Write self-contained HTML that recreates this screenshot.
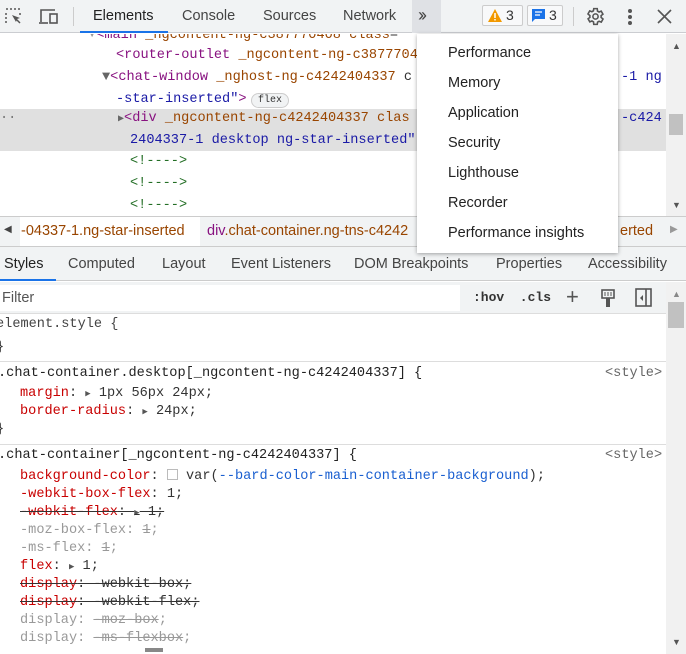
<!DOCTYPE html>
<html><head><style>
*{margin:0;padding:0;box-sizing:border-box}
body{width:686px;height:654px;overflow:hidden;background:#fff;font-family:"Liberation Sans",sans-serif;font-size:14px;color:#333;position:relative}
.abs{position:absolute}
.mono{font-family:"Liberation Mono",monospace;font-size:13.6px;white-space:pre}
.tb{left:0;top:0;width:686px;height:33px;background:#f1f3f4;border-bottom:1px solid #cbcdd1}
.tab{top:8px;font-size:14.5px;color:#444}
.tag{color:#881280}.attr{color:#994500}.val{color:#1a1aa6}.cm{color:#236e25}
.prop{color:#c80000}.grey{color:#999}
.row{left:0;height:22px;line-height:22px}
.menu{left:417px;top:34px;width:201px;height:219px;background:#fff;box-shadow:0 1px 4px rgba(0,0,0,.35)}
.menu div{position:absolute;left:31px;font-size:14.5px;color:#222;white-space:nowrap}
</style></head><body>
<div class="abs tb"></div>
<svg class="abs" style="left:4px;top:7px" width="20" height="20" viewBox="0 0 20 20"><path d="M2 2h2M6 2h2M10 2h2M14 2h2M2 6v2M2 10v2M2 14v2M16 6v2" stroke="#555" stroke-width="1.5"/><path d="M8 8l8 3-3 1-1 3z" fill="#555"/><path d="M12 12l4 4" stroke="#555" stroke-width="1.5"/></svg>
<svg class="abs" style="left:38px;top:8px" width="22" height="18" viewBox="0 0 22 18"><path d="M3 14V2h14" stroke="#555" stroke-width="1.6" fill="none"/><path d="M1 15h9" stroke="#555" stroke-width="1.6"/><rect x="12" y="6" width="7" height="9" stroke="#555" stroke-width="1.6" fill="none"/></svg>
<div class="abs" style="left:73px;top:7px;width:1px;height:19px;background:#ccc"></div>
<div class="abs tab" style="left:93px;color:#222">Elements</div>
<div class="abs" style="left:80px;top:31px;width:88px;height:2px;background:#1a73e8"></div>
<div class="abs tab" style="left:182px">Console</div>
<div class="abs tab" style="left:263px">Sources</div>
<div class="abs tab" style="left:343px">Network</div>
<div class="abs" style="left:412px;top:0;width:29px;height:33px;background:#dfe1e5"></div>
<div class="abs" style="left:418px;top:5px;font-size:18px;color:#444;letter-spacing:-3px">››</div>
<div class="abs" style="left:482px;top:5px;width:41px;height:21px;border:1px solid #ccc;border-radius:2px;background:#f8f9fa"></div>
<svg class="abs" style="left:488px;top:9px" width="14" height="13" viewBox="0 0 14 13"><path d="M7 0L14 13H0z" fill="#f29900"/><path d="M7 4v5M7 10v1.5" stroke="#fff" stroke-width="1.5"/></svg>
<div class="abs" style="left:506px;top:7px;font-size:14px">3</div>
<div class="abs" style="left:527px;top:5px;width:36px;height:21px;border:1px solid #ccc;border-radius:2px;background:#f8f9fa"></div>
<svg class="abs" style="left:532px;top:9px" width="13" height="13" viewBox="0 0 13 13"><path d="M0 0h13v10H3l-3 3z" fill="#1a73e8"/><path d="M3 3h7M3 6h5" stroke="#fff" stroke-width="1.2"/></svg>
<div class="abs" style="left:549px;top:7px;font-size:14px">3</div>
<div class="abs" style="left:573px;top:7px;width:1px;height:19px;background:#ccc"></div>
<svg class="abs" style="left:585px;top:6px" width="21" height="21" viewBox="0 0 24 24"><path d="M19.4 13a7.5 7.5 0 000-2l2.1-1.6-2-3.5-2.5 1a7 7 0 00-1.7-1L15 3h-4l-.4 2.6a7 7 0 00-1.7 1l-2.5-1-2 3.5L6.6 11a7.5 7.5 0 000 2l-2.1 1.6 2 3.5 2.5-1a7 7 0 001.7 1L11 21h4l.4-2.6a7 7 0 001.7-1l2.5 1 2-3.5z" transform="translate(-1 0)" fill="none" stroke="#555" stroke-width="1.8"/><circle cx="12" cy="12" r="3" fill="none" stroke="#555" stroke-width="1.8"/></svg>
<div class="abs" style="left:628px;top:9px;width:4px;height:4px;border-radius:2px;background:#555;box-shadow:0 6px 0 #555,0 12px 0 #555"></div>
<svg class="abs" style="left:657px;top:9px" width="15" height="15"><path d="M1 1l13 13M14 1L1 14" stroke="#555" stroke-width="1.6"/></svg>

<div class="abs" style="left:0;top:34px;width:666px;height:182px;overflow:hidden">
<div class="abs" style="left:0;top:75px;width:666px;height:42px;background:#e0e0e0"></div>
<div class="abs mono row" style="top:-9px;left:88px"><span class="grey">▾</span><span class="tag">&lt;main</span> <span class="attr">_ngcontent-ng-c387770408</span> <span class="attr">class</span>= </div>
<div class="abs mono row" style="top:11px;left:116px"><span class="tag">&lt;router-outlet</span> <span class="attr">_ngcontent-ng-c38777040</span></div>
<div class="abs mono row" style="top:33px;left:102px"><span style="color:#666">▼</span><span class="tag">&lt;chat-window</span> <span class="attr">_nghost-ng-c4242404337</span> c</div>
<div class="abs mono row val" style="top:33px;left:621px">-1 ng</div>
<div class="abs mono row" style="top:55px;left:116px"><span class="val">-star-inserted"</span><span class="tag">&gt;</span></div>
<div class="abs" style="left:251px;top:59px;width:38px;height:15px;border:1px solid #ccc;border-radius:8px;background:#f1f3f4;font-size:10px;font-family:'Liberation Mono',monospace;text-align:center;line-height:13px;color:#333">flex</div>
<div class="abs mono row" style="top:74px;left:0;color:#777">··</div>
<div class="abs mono row" style="top:74px;left:118px"><span style="color:#666;font-size:10px">▶</span><span class="tag">&lt;div</span> <span class="attr">_ngcontent-ng-c4242404337</span> <span class="attr">clas</span></div>
<div class="abs mono row val" style="top:74px;left:621px">-c424</div>
<div class="abs mono row" style="top:96px;left:130px"><span class="val">2404337-1 desktop ng-star-inserted"</span></div>
<div class="abs mono row cm" style="top:117px;left:130px">&lt;!----&gt;</div>
<div class="abs mono row cm" style="top:139px;left:130px">&lt;!----&gt;</div>
<div class="abs mono row cm" style="top:161px;left:130px">&lt;!----&gt;</div>
</div>
<div class="abs" style="left:666px;top:34px;width:20px;height:182px;background:#f1f1f1"></div>
<div class="abs" style="left:669px;top:114px;width:14px;height:21px;background:#c1c1c1"></div>
<div class="abs" style="left:672px;top:41px;font-size:9px;color:#555">▲</div>
<div class="abs" style="left:672px;top:200px;font-size:9px;color:#555">▼</div>

<div class="abs" style="left:0;top:216px;width:686px;height:31px;background:#f1f3f4;border-top:1px solid #ccc;border-bottom:1px solid #ccc"></div>
<div class="abs" style="left:20px;top:217px;width:180px;height:29px;background:#fff"></div>
<div class="abs" style="left:4px;top:224px;font-size:10px;color:#444">◀</div>
<div class="abs" style="left:21px;top:223px;font-size:14.5px;color:#994500">-04337-1.ng-star-inserted</div>
<div class="abs" style="left:207px;top:223px;font-size:14.5px;color:#881280;white-space:nowrap">div<span style="color:#994500">.chat-container.ng-tns-c4242</span></div>
<div class="abs" style="left:620px;top:223px;font-size:14.5px;color:#994500">erted</div>
<div class="abs" style="left:670px;top:224px;font-size:10px;color:#999">▶</div>

<div class="abs" style="left:0;top:247px;width:686px;height:34px;background:#f1f3f4;border-bottom:1px solid #ccc"></div>
<div class="abs tab" style="top:256px;left:4px;color:#222">Styles</div>
<div class="abs" style="left:0;top:279px;width:56px;height:2px;background:#1a73e8"></div>
<div class="abs tab" style="top:256px;left:68px">Computed</div>
<div class="abs tab" style="top:256px;left:162px">Layout</div>
<div class="abs tab" style="top:256px;left:231px">Event Listeners</div>
<div class="abs tab" style="top:256px;left:354px">DOM Breakpoints</div>
<div class="abs tab" style="top:256px;left:496px">Properties</div>
<div class="abs tab" style="top:256px;left:588px">Accessibility</div>

<div class="abs" style="left:0;top:282px;width:666px;height:32px;background:#f1f3f4;border-bottom:1px solid #ddd"></div>
<div class="abs" style="left:0;top:285px;width:460px;height:26px;background:#fff"></div>
<div class="abs" style="left:2px;top:290px;font-size:14.5px;color:#555">Filter</div>
<div class="abs" style="left:473px;top:290px;font-family:'Liberation Mono',monospace;font-size:13px;white-space:pre;font-weight:bold;color:#333">:hov  .cls</div>
<div class="abs" style="left:566px;top:284px;font-size:22px;color:#555;font-weight:300">+</div>
<svg class="abs" style="left:600px;top:289px" width="16" height="20"><rect x="2" y="1" width="12" height="8" fill="none" stroke="#555" stroke-width="1.6"/><path d="M5 3v4M8 3v4M11 3v4" stroke="#555"/><rect x="6" y="9" width="4" height="9" fill="#555"/></svg>
<svg class="abs" style="left:635px;top:288px" width="18" height="20"><rect x="1" y="1" width="15" height="17" fill="none" stroke="#555" stroke-width="1.6"/><path d="M11 1v17" stroke="#555" stroke-width="1.6"/><path d="M8 7l-3 3 3 3z" fill="#555"/></svg>

<div class="abs" style="left:666px;top:282px;width:20px;height:372px;background:#f1f1f1"></div>
<div class="abs" style="left:668px;top:302px;width:16px;height:26px;background:#c1c1c1"></div>
<div class="abs" style="left:672px;top:289px;font-size:9px;color:#888">▲</div>
<div class="abs" style="left:672px;top:637px;font-size:9px;color:#555">▼</div>
<div class="abs mono" style="left:-4px;top:317px;color:#444">element.style {</div>
<div class="abs mono" style="left:-4px;top:340px">}</div>
<div class="abs" style="left:0;top:361px;width:666px;height:1px;background:#ddd"></div>
<div class="abs mono" style="left:-2px;top:366px;color:#222">.chat-container.desktop[_ngcontent-ng-c4242404337] {</div>
<div class="abs mono" style="left:605px;top:366px;color:#666">&lt;style&gt;</div>
<div class="abs mono" style="left:20px;top:386px"><span class="prop">margin</span>: <span style="font-size:9px;color:#555">▶</span> 1px 56px 24px;</div>
<div class="abs mono" style="left:20px;top:404px"><span class="prop">border-radius</span>: <span style="font-size:9px;color:#555">▶</span> 24px;</div>
<div class="abs mono" style="left:-4px;top:422px">}</div>
<div class="abs" style="left:0;top:444px;width:666px;height:1px;background:#ddd"></div>
<div class="abs mono" style="left:-2px;top:448px;color:#222">.chat-container[_ngcontent-ng-c4242404337] {</div>
<div class="abs mono" style="left:605px;top:448px;color:#666">&lt;style&gt;</div>
<div class="abs mono" style="left:20px;top:469px"><span class="prop">background-color</span>: <span style="display:inline-block;width:11px;height:11px;border:1px solid #bbb;vertical-align:-1px"></span> var(<span style="color:#1a5fd0">--bard-color-main-container-background</span>);</div>
<div class="abs mono" style="left:20px;top:487px"><span class="prop">-webkit-box-flex</span>: 1;</div>
<div class="abs mono" style="left:20px;top:505px;text-decoration:line-through"><span class="prop">-webkit-flex</span>: <span style="font-size:9px;color:#555">▶</span> 1;</div>
<div class="abs mono grey" style="left:20px;top:523px">-moz-box-flex: <s>1</s>;</div>
<div class="abs mono grey" style="left:20px;top:541px">-ms-flex: <s>1</s>;</div>
<div class="abs mono" style="left:20px;top:559px"><span class="prop">flex</span>: <span style="font-size:9px;color:#555">▶</span> 1;</div>
<div class="abs mono" style="left:20px;top:577px;text-decoration:line-through"><span class="prop">display</span>: -webkit-box;</div>
<div class="abs mono" style="left:20px;top:595px;text-decoration:line-through"><span class="prop">display</span>: -webkit-flex;</div>
<div class="abs mono grey" style="left:20px;top:613px">display: <s>-moz-box</s>;</div>
<div class="abs mono grey" style="left:20px;top:631px">display: <s>-ms-flexbox</s>;</div>
<div class="abs" style="left:145px;top:648px;width:18px;height:4px;background:#888"></div>

<div class="abs menu">
<div style="top:11px">Performance</div>
<div style="top:41px">Memory</div>
<div style="top:71px">Application</div>
<div style="top:101px">Security</div>
<div style="top:131px">Lighthouse</div>
<div style="top:161px">Recorder</div>
<div style="top:191px">Performance insights</div>
</div>
</body></html>
